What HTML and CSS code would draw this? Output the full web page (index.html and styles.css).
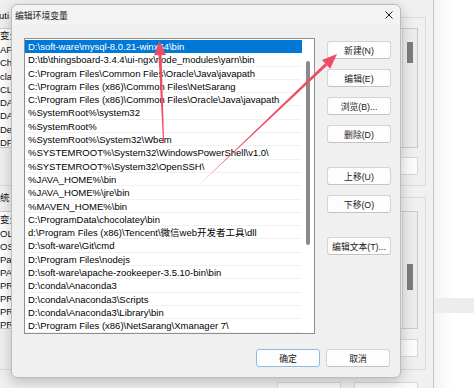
FILE: index.html
```html
<!DOCTYPE html>
<html lang="zh-CN">
<head>
    <meta charset="UTF-8">
    <meta name="viewport" content="width=device-width, initial-scale=1.0">
    <title>编辑环境变量</title>
    <link rel="stylesheet" href="styles.css">
</head>
<body>
<div class="desk">
    <!-- environment variables window in the back -->
    <div class="bgwin">
        <div class="bg-label">uti</div>
        <div class="bg-group g1">
            <div class="bg-list">
                <div class="bg-rows">
                    <div class="bg-head">变量</div>
                    <div>AP</div>
                    <div>Ch</div>
                    <div>cla</div>
                    <div>CLI</div>
                    <div>DA</div>
                    <div>DA</div>
                    <div>De</div>
                    <div>DF</div>
                </div>
                <div class="bg-scroll"><div class="bg-thumb"></div></div>
            </div>
            <div class="bg-btns"><span class="bg-btn"></span></div>
        </div>
        <div class="bg-label l2">统</div>
        <div class="bg-group g2">
            <div class="bg-list">
                <div class="bg-rows">
                    <div class="bg-head">变量</div>
                    <div>OL</div>
                    <div>OS</div>
                    <div>Pa</div>
                    <div>PA</div>
                    <div>PR</div>
                    <div>PR</div>
                    <div>PR</div>
                    <div>PR</div>
                </div>
                <div class="bg-scroll"><div class="bg-thumb t2"></div></div>
            </div>
            <div class="bg-btns"><span class="bg-btn"></span></div>
        </div>
        <div class="bg-foot"><span class="bg-btn"></span><span class="bg-btn"></span></div>
    </div>
    <div class="side"><div class="side-band"></div></div>

    <!-- the dialog -->
    <div class="dialog">
        <div class="titlebar">
            <span class="title">编辑环境变量</span>
            <svg class="close" width="8" height="8" viewBox="0 0 8 8">
                <path d="M0.5 0.5 L7.5 7.5 M7.5 0.5 L0.5 7.5" stroke="#1b1b1b" stroke-width="1" fill="none"/>
            </svg>
        </div>
        <div class="main">
            <div class="list">
                <div class="rows">
                    <div class="row selected">D:\soft-ware\mysql-8.0.21-winx64\bin</div>
                    <div class="row">D:\tb\thingsboard-3.4.4\ui-ngx\node_modules\yarn\bin</div>
                    <div class="row">C:\Program Files\Common Files\Oracle\Java\javapath</div>
                    <div class="row">C:\Program Files (x86)\Common Files\NetSarang</div>
                    <div class="row">C:\Program Files (x86)\Common Files\Oracle\Java\javapath</div>
                    <div class="row">%SystemRoot%\system32</div>
                    <div class="row">%SystemRoot%</div>
                    <div class="row">%SystemRoot%\System32\Wbem</div>
                    <div class="row">%SYSTEMROOT%\System32\WindowsPowerShell\v1.0\</div>
                    <div class="row">%SYSTEMROOT%\System32\OpenSSH\</div>
                    <div class="row">%JAVA_HOME%\bin</div>
                    <div class="row">%JAVA_HOME%\jre\bin</div>
                    <div class="row">%MAVEN_HOME%\bin</div>
                    <div class="row">C:\ProgramData\chocolatey\bin</div>
                    <div class="row">d:\Program Files (x86)\Tencent\微信web开发者工具\dll</div>
                    <div class="row">D:\soft-ware\Git\cmd</div>
                    <div class="row">D:\Program Files\nodejs</div>
                    <div class="row">D:\soft-ware\apache-zookeeper-3.5.10-bin\bin</div>
                    <div class="row">D:\conda\Anaconda3</div>
                    <div class="row">D:\conda\Anaconda3\Scripts</div>
                    <div class="row">D:\conda\Anaconda3\Library\bin</div>
                    <div class="row">D:\Program Files (x86)\NetSarang\Xmanager 7\</div>
                </div>
                <div class="vscroll"><div class="thumb"></div></div>
            </div>
            <div class="btns">
                <button class="btn">新建(N)</button>
                <button class="btn">编辑(E)</button>
                <button class="btn">浏览(B)...</button>
                <button class="btn">删除(D)</button>
                <button class="btn spaced">上移(U)</button>
                <button class="btn">下移(O)</button>
                <button class="btn spaced">编辑文本(T)...</button>
            </div>
        </div>
        <div class="foot">
            <button class="btn default">确定</button>
            <button class="btn">取消</button>
        </div>
    </div>

    <!-- red annotation arrows -->
    <svg class="marks" width="474" height="388" viewBox="0 0 474 388">
        <polygon points="163.1,143 164.1,143 161.5,55 158.5,55" fill="#ef4b63"/>
        <polygon points="159.5,41 166,55 154,55.3" fill="#ef4b63"/>
        <polygon points="199.7,184.3 200.3,183.7 327.1,65.4 325.1,63.2" fill="#ef4b63"/>
        <polygon points="337,54 330.2,68.7 322,59.9" fill="#ef4b63"/>
    </svg>
</div>
</body>
</html>
```

FILE: styles.css
```css
body {
    margin: 0;
    padding: 0;
    background: #fff;
    font-family: "Liberation Sans", "Noto Sans CJK SC", sans-serif;
}

.desk { position: relative; width: 474px; height: 388px; overflow: hidden; display: flex; }

/* back window */
.bgwin { width: 434px; height: 388px; background: #f0f0f0; border-right: 1px solid #c9c9c9; padding-top: 10px; box-sizing: border-box; font-size: 9.5px; color: #111; }
.bg-label { height: 7px; line-height: 12px; margin-left: -1px; white-space: nowrap; }
.bg-label.l2 { height: 5px; margin-top: 6px; margin-left: 0; }
.bg-group { width: 426px; border: 1px solid #dadada; border-left: none; box-sizing: border-box; padding-right: 7px; }
.g1 { height: 169px; padding-top: 10px; }
.g2 { height: 173px; padding-top: 13px; }
.bg-list { display: flex; height: 120px; background: #fff; border: 1px solid #c9c9c9; border-left: none; box-sizing: border-box; }
.g2 .bg-list { height: 118px; }
.bg-rows { flex: 1; line-height: 13.3px; white-space: nowrap; }
.g2 .bg-rows { line-height: 13px; }
.bg-head { height: 14px; line-height: 14px; }
.g2 .bg-head { height: 15px; line-height: 15px; }
.bg-scroll { width: 15px; background: #ececec; border-left: 1px solid #d6d6d6; padding: 13px 0 0 4px; box-sizing: border-box; }
.bg-thumb { width: 6px; height: 21px; background: #7c7c7c; }
.bg-thumb.t2 { margin-top: 39px; height: 26px; }
.bg-btns { display: flex; justify-content: flex-end; margin-top: 9px; }
.g2 .bg-btns { margin-top: 10px; }
.bg-btn { width: 80px; height: 18px; background: #fbfbfb; border: 1px solid #d8d8d8; box-sizing: border-box; }
.bg-foot { display: flex; justify-content: flex-end; gap: 13px; margin-top: 12px; padding-right: 15px; }
.bg-foot .bg-btn { width: 64px; }

.side { flex: 1; padding-top: 298px; background: linear-gradient(to right, #f3f3f3, #fff 18px); }
.side-band { height: 15px; background: #ededed; }

/* dialog */
.dialog { position: absolute; left: 11px; top: 4px; width: 390px; height: 374px; box-sizing: border-box; background: #f0f0f0; border: 1px solid #bcbcbc; border-radius: 6px; box-shadow: 0 4px 14px rgba(0, 0, 0, 0.22); display: flex; flex-direction: column; }
.titlebar { height: 20px; display: flex; align-items: center; justify-content: space-between; padding: 0 7px 0 3px; background: #f3f3f3; border-radius: 6px 6px 0 0; }
.title { font-family: "Noto Sans CJK SC", sans-serif; font-size: 8.8px; color: #1a1a1a; }
.main { display: flex; margin-top: 13px; padding-left: 12px; }
.list { display: flex; width: 291px; height: 296px; background: #fff; border: 1px solid #8f8f8f; box-sizing: border-box; }
.rows { width: 277px; padding-top: 1px; }
.row { height: 13.3px; line-height: 13px; padding-left: 3px; font-size: 9.5px; color: #000; white-space: nowrap; overflow: hidden; border-bottom: 1px solid #f1f1f1; box-sizing: border-box; }
.row.selected { background: #0078d7; color: #fff; border-bottom-color: #0078d7; }
.vscroll { flex: 1; padding: 22px 0 0 4px; }
.thumb { width: 4px; height: 184px; background: #8a8a8a; border-radius: 2px; }

.btns { display: flex; flex-direction: column; width: 64px; margin: 3px 0 0 12px; }
.btn { height: 18px; margin: 0 0 10px; padding: 0; background: #fdfdfd; border: 1px solid #d3d3d3; border-bottom-color: #c4c4c4; border-radius: 3px; font-family: "Liberation Sans", "Noto Sans CJK SC", sans-serif; font-size: 8.8px; color: #1a1a1a; }
.btn.spaced { margin-top: 14px; }
.foot { display: flex; justify-content: flex-end; gap: 6px; margin-top: 15px; padding-right: 10px; }
.foot .btn { width: 64px; margin: 0; }
.btn.default { border-color: #8dbbe8; background: #fbfdff; }

.marks { position: absolute; left: 0; top: 0; pointer-events: none; }
```
